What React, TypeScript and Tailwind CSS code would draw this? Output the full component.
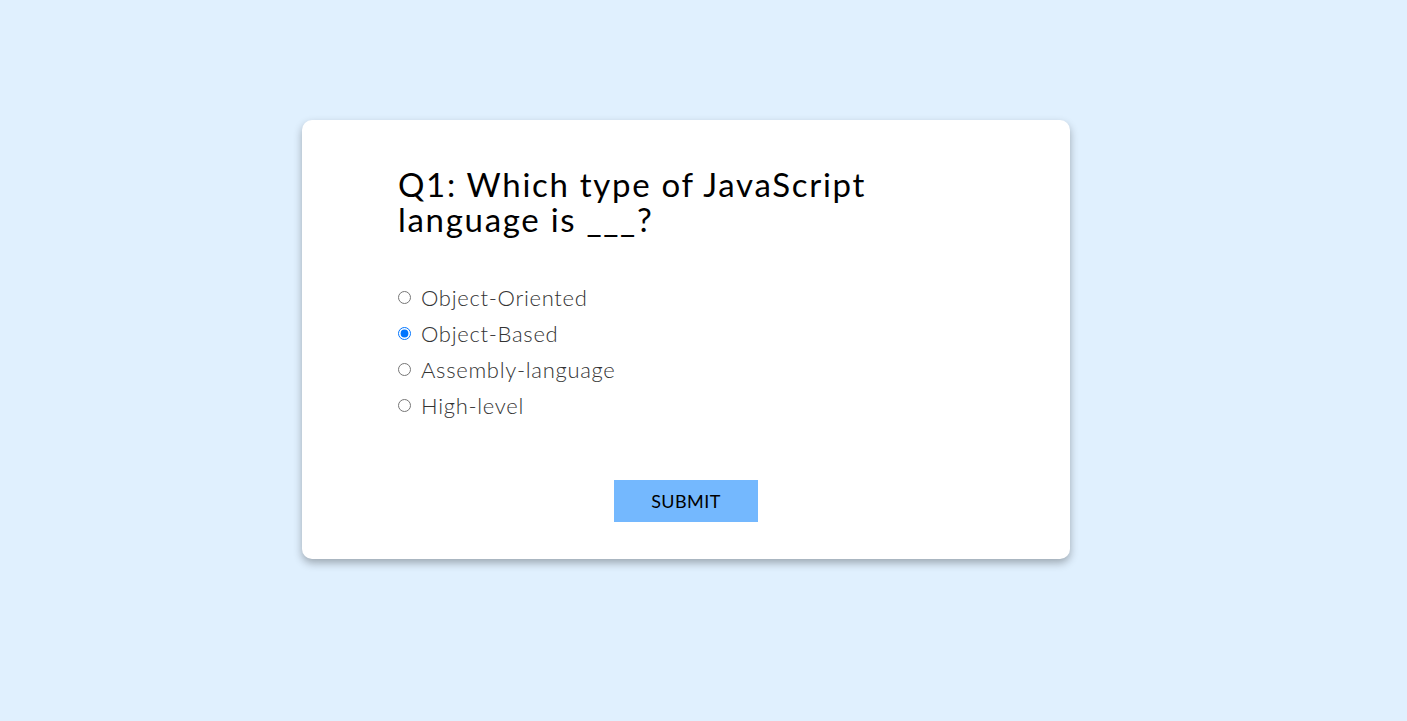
import { useState } from "react";

const options = ["Object-Oriented", "Object-Based", "Assembly-language", "High-level"];

export default function App() {
  const [answer, setAnswer] = useState("Object-Based");

  return (
    <div className="min-h-[721px] bg-[#e0f0fe] pt-[120px] pl-[302px] font-['Lato',sans-serif]">
      <div className="w-[768px] rounded-[10px] bg-white shadow-[0_4px_8px_rgba(0,0,0,0.3)] overflow-hidden">
        <div className="px-[96px] pt-[47px]">
          <h2 className="max-w-[490px] text-[33px] leading-[35px] font-normal tracking-[1.7px] text-black">
            Q1: Which type of JavaScript language is ___?
          </h2>
          <ul className="mt-[42px] flex flex-col">
            {options.map((opt) => (
              <li key={opt} className="flex items-center h-[36px]">
                <input
                  type="radio"
                  name="q1"
                  id={opt}
                  checked={answer === opt}
                  onChange={() => setAnswer(opt)}
                  className="m-0 w-[13px] h-[13px] accent-[#0075ff]"
                />
                <label htmlFor={opt} className="ml-[10px] text-[22px] font-light tracking-[0.7px] text-[#333]">
                  {opt}
                </label>
              </li>
            ))}
          </ul>
        </div>
        <div className="flex justify-center pt-[57px] pb-[37px]">
          <button className="w-[144px] h-[42px] bg-[#74b8fe] text-[18px] text-black tracking-wide">
            SUBMIT
          </button>
        </div>
      </div>
    </div>
  );
}
